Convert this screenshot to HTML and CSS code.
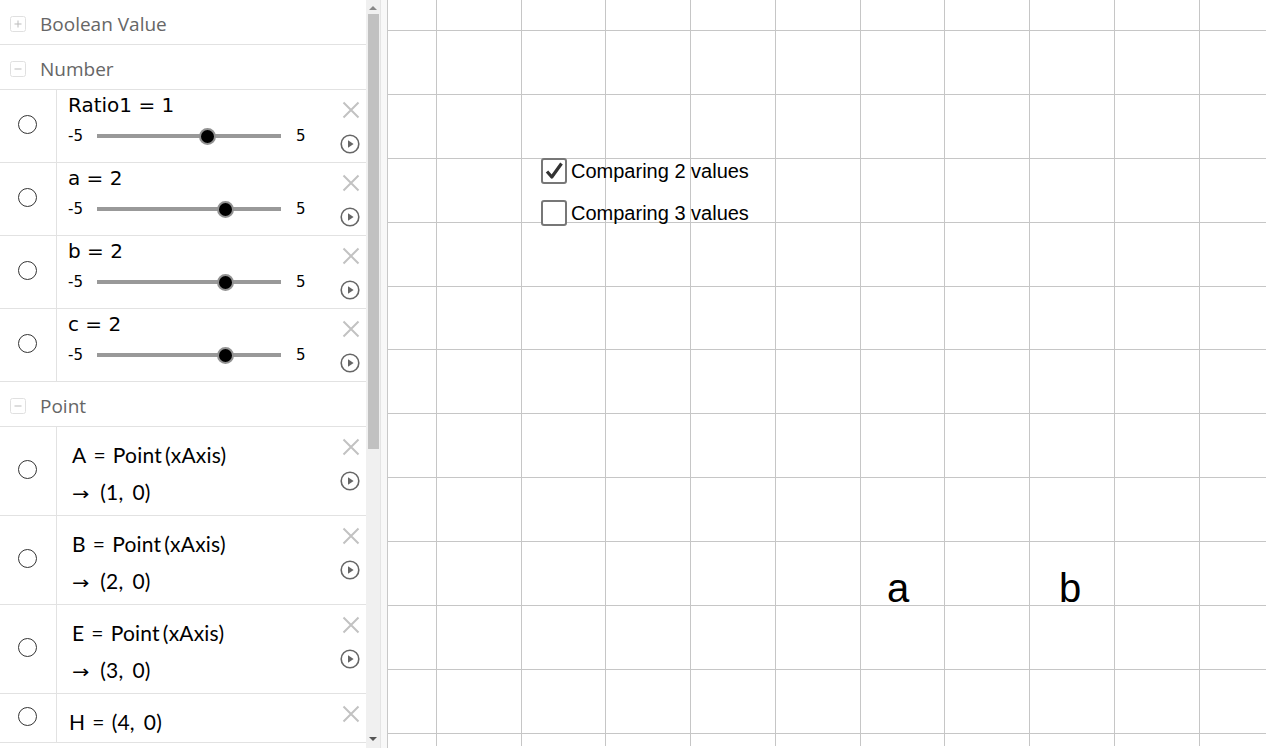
FILE: index.html
```html
<!DOCTYPE html>
<html lang="en">

<head>
    <meta charset="UTF-8">
    <title>Comparing values</title>
    <link rel="stylesheet" href="styles.css">
</head>

<body>
    <div class="app">
        <div class="algebra">
            <div class="av-header">
                <svg class="toggle" width="16" height="16" viewBox="0 0 16 16"><rect x="0.5" y="0.5" width="15" height="15" rx="2" fill="none" stroke="#e0e0e0"/><path d="M4.5 8h7M8 4.5v7" stroke="#bbb" stroke-width="1"/></svg>
                <span class="header-title">Boolean Value</span>
            </div>
            <div class="av-header">
                <svg class="toggle" width="16" height="16" viewBox="0 0 16 16"><rect x="0.5" y="0.5" width="15" height="15" rx="2" fill="none" stroke="#e0e0e0"/><path d="M4.5 8h7" stroke="#bbb" stroke-width="1"/></svg>
                <span class="header-title">Number</span>
            </div>

            <div class="av-row">
                <div class="row-marble"><span class="marble"></span></div>
                <div class="row-body">
                    <div class="row-title">Ratio1 = 1</div>
                    <div class="slider">
                        <span class="slider-min">-5</span>
                        <div class="slider-track"><span class="slider-thumb" style="left: 60%"></span></div>
                        <span class="slider-max">5</span>
                    </div>
                </div>
                <div class="row-actions">
                    <svg class="icon-close" width="18" height="18" viewBox="0 0 18 18"><path d="M1.5 1.5l15 15M16.5 1.5l-15 15"/></svg>
                    <svg class="icon-play" width="20" height="20" viewBox="0 0 20 20"><circle cx="10" cy="10" r="8.8"/><path d="M8 6.3L13.6 10L8 13.7Z"/></svg>
                </div>
            </div>
            <div class="av-row">
                <div class="row-marble"><span class="marble"></span></div>
                <div class="row-body">
                    <div class="row-title">a = 2</div>
                    <div class="slider">
                        <span class="slider-min">-5</span>
                        <div class="slider-track"><span class="slider-thumb" style="left: 70%"></span></div>
                        <span class="slider-max">5</span>
                    </div>
                </div>
                <div class="row-actions">
                    <svg class="icon-close" width="18" height="18" viewBox="0 0 18 18"><path d="M1.5 1.5l15 15M16.5 1.5l-15 15"/></svg>
                    <svg class="icon-play" width="20" height="20" viewBox="0 0 20 20"><circle cx="10" cy="10" r="8.8"/><path d="M8 6.3L13.6 10L8 13.7Z"/></svg>
                </div>
            </div>
            <div class="av-row">
                <div class="row-marble"><span class="marble"></span></div>
                <div class="row-body">
                    <div class="row-title">b = 2</div>
                    <div class="slider">
                        <span class="slider-min">-5</span>
                        <div class="slider-track"><span class="slider-thumb" style="left: 70%"></span></div>
                        <span class="slider-max">5</span>
                    </div>
                </div>
                <div class="row-actions">
                    <svg class="icon-close" width="18" height="18" viewBox="0 0 18 18"><path d="M1.5 1.5l15 15M16.5 1.5l-15 15"/></svg>
                    <svg class="icon-play" width="20" height="20" viewBox="0 0 20 20"><circle cx="10" cy="10" r="8.8"/><path d="M8 6.3L13.6 10L8 13.7Z"/></svg>
                </div>
            </div>
            <div class="av-row">
                <div class="row-marble"><span class="marble"></span></div>
                <div class="row-body">
                    <div class="row-title">c = 2</div>
                    <div class="slider">
                        <span class="slider-min">-5</span>
                        <div class="slider-track"><span class="slider-thumb" style="left: 70%"></span></div>
                        <span class="slider-max">5</span>
                    </div>
                </div>
                <div class="row-actions">
                    <svg class="icon-close" width="18" height="18" viewBox="0 0 18 18"><path d="M1.5 1.5l15 15M16.5 1.5l-15 15"/></svg>
                    <svg class="icon-play" width="20" height="20" viewBox="0 0 20 20"><circle cx="10" cy="10" r="8.8"/><path d="M8 6.3L13.6 10L8 13.7Z"/></svg>
                </div>
            </div>

            <div class="av-header">
                <svg class="toggle" width="16" height="16" viewBox="0 0 16 16"><rect x="0.5" y="0.5" width="15" height="15" rx="2" fill="none" stroke="#e0e0e0"/><path d="M4.5 8h7" stroke="#bbb" stroke-width="1"/></svg>
                <span class="header-title">Point</span>
            </div>

            <div class="av-row point-row">
                <div class="row-marble"><span class="marble"></span></div>
                <div class="row-body">
                    <div class="math">A<span class="eq">=</span>Point<span class="paren">(xAxis)</span></div>
                    <div class="math"><span class="arrow">→</span>(1,<span class="sep"></span>0)</div>
                </div>
                <div class="row-actions">
                    <svg class="icon-close" width="18" height="18" viewBox="0 0 18 18"><path d="M1.5 1.5l15 15M16.5 1.5l-15 15"/></svg>
                    <svg class="icon-play" width="20" height="20" viewBox="0 0 20 20"><circle cx="10" cy="10" r="8.8"/><path d="M8 6.3L13.6 10L8 13.7Z"/></svg>
                </div>
            </div>
            <div class="av-row point-row">
                <div class="row-marble"><span class="marble"></span></div>
                <div class="row-body">
                    <div class="math">B<span class="eq">=</span>Point<span class="paren">(xAxis)</span></div>
                    <div class="math"><span class="arrow">→</span>(2,<span class="sep"></span>0)</div>
                </div>
                <div class="row-actions">
                    <svg class="icon-close" width="18" height="18" viewBox="0 0 18 18"><path d="M1.5 1.5l15 15M16.5 1.5l-15 15"/></svg>
                    <svg class="icon-play" width="20" height="20" viewBox="0 0 20 20"><circle cx="10" cy="10" r="8.8"/><path d="M8 6.3L13.6 10L8 13.7Z"/></svg>
                </div>
            </div>
            <div class="av-row point-row">
                <div class="row-marble"><span class="marble"></span></div>
                <div class="row-body">
                    <div class="math">E<span class="eq">=</span>Point<span class="paren">(xAxis)</span></div>
                    <div class="math"><span class="arrow">→</span>(3,<span class="sep"></span>0)</div>
                </div>
                <div class="row-actions">
                    <svg class="icon-close" width="18" height="18" viewBox="0 0 18 18"><path d="M1.5 1.5l15 15M16.5 1.5l-15 15"/></svg>
                    <svg class="icon-play" width="20" height="20" viewBox="0 0 20 20"><circle cx="10" cy="10" r="8.8"/><path d="M8 6.3L13.6 10L8 13.7Z"/></svg>
                </div>
            </div>
            <div class="av-row free-row">
                <div class="row-marble"><span class="marble"></span></div>
                <div class="row-body">
                    <div class="math">H<span class="eq">=</span>(4,<span class="sep"></span>0)</div>
                </div>
                <div class="row-actions">
                    <svg class="icon-close" width="18" height="18" viewBox="0 0 18 18"><path d="M1.5 1.5l15 15M16.5 1.5l-15 15"/></svg>
                </div>
            </div>
            <div class="av-row free-row"></div>
        </div>

        <div class="scrollbar">
            <span class="scroll-arrow up"></span>
            <div class="scroll-thumb"></div>
            <span class="scroll-arrow down"></span>
        </div>
        <div class="splitter"></div>

        <div class="graphics">
            <svg class="grid" width="878" height="746">
                <g stroke="#c6c6c6" stroke-width="1">
                    <line x1="48.5" y1="0" x2="48.5" y2="746"/>
                    <line x1="133.5" y1="0" x2="133.5" y2="746"/>
                    <line x1="217.5" y1="0" x2="217.5" y2="746"/>
                    <line x1="302.5" y1="0" x2="302.5" y2="746"/>
                    <line x1="387.5" y1="0" x2="387.5" y2="746"/>
                    <line x1="472.5" y1="0" x2="472.5" y2="746"/>
                    <line x1="556.5" y1="0" x2="556.5" y2="746"/>
                    <line x1="641.5" y1="0" x2="641.5" y2="746"/>
                    <line x1="726.5" y1="0" x2="726.5" y2="746"/>
                    <line x1="811.5" y1="0" x2="811.5" y2="746"/>
                    <line x1="0" y1="30.5" x2="878" y2="30.5"/>
                    <line x1="0" y1="94.5" x2="878" y2="94.5"/>
                    <line x1="0" y1="158.5" x2="878" y2="158.5"/>
                    <line x1="0" y1="222.5" x2="878" y2="222.5"/>
                    <line x1="0" y1="286.5" x2="878" y2="286.5"/>
                    <line x1="0" y1="349.5" x2="878" y2="349.5"/>
                    <line x1="0" y1="413.5" x2="878" y2="413.5"/>
                    <line x1="0" y1="477.5" x2="878" y2="477.5"/>
                    <line x1="0" y1="541.5" x2="878" y2="541.5"/>
                    <line x1="0" y1="605.5" x2="878" y2="605.5"/>
                    <line x1="0" y1="669.5" x2="878" y2="669.5"/>
                    <line x1="0" y1="733.5" x2="878" y2="733.5"/>
                </g>
            </svg>

            <label class="check check-two">
                <span class="check-box checked">
                    <svg width="22" height="22" viewBox="0 0 22 22"><path d="M4 11.5L8.8 17L18.5 3.5" fill="none" stroke="#333" stroke-width="3.2" stroke-linejoin="round"/></svg>
                </span>
                <span class="check-label">Comparing 2 values</span>
            </label>
            <label class="check check-three">
                <span class="check-box"></span>
                <span class="check-label">Comparing 3 values</span>
            </label>

            <span class="point-label label-a">a</span>
            <span class="point-label label-b">b</span>
        </div>
    </div>
</body>

</html>
```

FILE: styles.css
```css
html,
body {
    margin: 0;
    padding: 0;
    height: 100%;
    overflow: hidden;
    background-color: white;
}

.app {
    display: flex;
    height: 100vh;
}

/* algebra view */

.algebra {
    width: 366px;
    flex-shrink: 0;
    overflow: hidden;
    font-family: 'DejaVu Sans', sans-serif;
    color: #000;
}

.av-header {
    display: flex;
    align-items: center;
    height: 45px;
    padding: 3px 0 0 10px;
    box-sizing: border-box;
    border-bottom: 1px solid #e2e2e2;
}

.toggle {
    flex-shrink: 0;
}

.header-title {
    margin-left: 14px;
    font-family: 'Open Sans', sans-serif;
    font-size: 19px;
    color: #666;
}

.av-row {
    display: flex;
    height: 73px;
    box-sizing: border-box;
    border-bottom: 1px solid #e2e2e2;
}

.point-row {
    height: 89px;
}

.free-row {
    height: 49px;
}

.row-marble {
    width: 57px;
    flex-shrink: 0;
    box-sizing: border-box;
    border-right: 1px solid #e2e2e2;
    padding-bottom: 4px;
    display: flex;
    align-items: center;
    justify-content: center;
}

.free-row .row-marble {
    padding-bottom: 3px;
}

.marble {
    width: 17px;
    height: 17px;
    border: 1px solid #333;
    border-radius: 50%;
    margin-right: 1px;
}

.row-body {
    flex: 1;
    padding: 1px 0 0 11px;
}

.row-title {
    font-size: 20px;
    line-height: 28px;
}

.slider {
    display: flex;
    align-items: center;
    height: 20px;
    margin-top: 7px;
    font-size: 15px;
}

.slider-min {
    width: 29px;
}

.slider-track {
    position: relative;
    width: 184px;
    height: 4px;
    background: #999;
}

.slider-thumb {
    position: absolute;
    top: 50%;
    width: 13px;
    height: 13px;
    margin: -8.5px 0 0 -8.5px;
    border-radius: 50%;
    background: #000;
    border: 2px solid #929292;
}

.slider-max {
    margin-left: 15px;
}

.row-actions {
    width: 30px;
    display: flex;
    flex-direction: column;
    align-items: center;
    padding-top: 11px;
}

.icon-close path {
    stroke: #c2c2c2;
    stroke-width: 2;
}

.icon-play {
    margin-top: 15px;
    margin-right: 2px;
}

.icon-play circle {
    fill: none;
    stroke: #666;
    stroke-width: 1.6;
}

.icon-play path {
    fill: #666;
}

/* rows written in math notation */

.point-row .row-body {
    padding: 9px 0 0 15px;
}

.free-row .row-body {
    padding: 9px 0 0 12px;
}

.math {
    font-family: Lato, sans-serif;
    font-size: 21px;
    line-height: 37px;
    letter-spacing: 0.2px;
}

.eq {
    margin: 0 7px;
}

.paren {
    margin-left: 3px;
}

.sep {
    display: inline-block;
    width: 9px;
}

.arrow {
    display: inline-block;
    font-family: 'DejaVu Sans', sans-serif;
    font-size: 18px;
    transform: scaleX(1.15);
    transform-origin: left center;
    margin-right: 13px;
}

/* scrollbar + splitter */

.scrollbar {
    width: 14px;
    flex-shrink: 0;
    background: #f0f0f0;
    display: flex;
    flex-direction: column;
    align-items: center;
}

.scroll-arrow {
    width: 0;
    height: 0;
    border-left: 4px solid transparent;
    border-right: 4px solid transparent;
}

.scroll-arrow.up {
    margin: 6px 0 4px;
    border-bottom: 4px solid #888;
}

.scroll-arrow.down {
    margin: auto 0 7px;
    border-top: 4px solid #555;
}

.scroll-thumb {
    width: 11px;
    height: 435px;
    background: #c1c1c1;
}

.splitter {
    width: 8px;
    flex-shrink: 0;
    box-sizing: border-box;
    background: #f8f8f8;
    border-left: 1px solid #e4e4e4;
    border-right: 1px solid #c8c8c8;
}

/* graphics view */

.graphics {
    flex: 1;
    position: relative;
    overflow: hidden;
    font-family: 'Liberation Sans', Arial, sans-serif;
}

.grid {
    position: absolute;
    left: 0;
    top: 0;
}

.check {
    position: absolute;
    left: 153px;
    display: flex;
    align-items: center;
}

.check-two {
    top: 158px;
}

.check-three {
    top: 200px;
}

.check-box {
    width: 26px;
    height: 26px;
    box-sizing: border-box;
    border: 2px solid #777;
    border-radius: 3px;
    background: #fff;
    display: flex;
    align-items: center;
    justify-content: center;
}

.check-label {
    margin-left: 4px;
    font-size: 20px;
    color: #000;
}

.point-label {
    position: absolute;
    font-size: 40px;
    line-height: 1;
    color: #000;
}

.label-a {
    left: 499px;
    top: 568px;
}

.label-b {
    left: 671px;
    top: 568px;
}
```
